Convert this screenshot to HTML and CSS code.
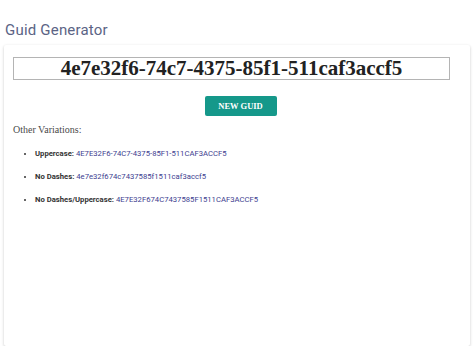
FILE: index.html
```html
<!DOCTYPE html>
<html lang="en">
  <head>
    <meta charset="UTF-8" />
    <meta name="viewport" content="width=device-width, initial-scale=1.0" />
    <title>Guid Generator</title>
    <link rel="stylesheet" href="styles.css">
  </head>
  <body>
    <h1 class="title">Guid Generator</h1>
    <div class="card">
      <div class="guid-box">4e7e32f6-74c7-4375-85f1-511caf3accf5</div>
      <div class="actions">
        <button class="btn">NEW GUID</button>
      </div>
      <p class="others">Other Variations:</p>
      <ul class="variations">
        <li><strong>Uppercase:</strong> <a href="#">4E7E32F6-74C7-4375-85F1-511CAF3ACCF5</a></li>
        <li><strong>No Dashes:</strong> <a href="#">4e7e32f674c7437585f1511caf3accf5</a></li>
        <li><strong>No Dashes/Uppercase:</strong> <a href="#">4E7E32F674C7437585F1511CAF3ACCF5</a></li>
      </ul>
    </div>
  </body>
</html>
```

FILE: styles.css
```css
body {
  margin: 0;
  padding: 0;
  background-color: #ffffff;
  font-family: Roboto, "Liberation Sans", sans-serif;
  color: #333333;
}
.title {
  margin: 0;
  padding: 21px 0 0 5px;
  height: 24px;
  font-size: 15px;
  font-weight: 400;
  letter-spacing: 0.2px;
  color: #5b6485;
}
.card {
  margin: 0 4px;
  height: 301px;
  box-sizing: border-box;
  padding: 12px 9px;
  background: #ffffff;
  border-radius: 2px;
  box-shadow: 0 1px 3px rgba(0, 0, 0, 0.22);
}
.guid-box {
  width: 437px;
  height: 23px;
  box-sizing: border-box;
  border: 1px solid #b4b4b4;
  text-align: center;
  font-family: "Liberation Serif", serif;
  font-weight: bold;
  font-size: 21px;
  line-height: 21px;
  color: #222222;
}
.actions {
  display: flex;
  justify-content: center;
  padding-left: 7px;
  margin-top: 16px;
}
.btn {
  width: 72px;
  height: 20px;
  border: none;
  border-radius: 2px;
  background-color: #15988a;
  color: #ffffff;
  font-family: "Liberation Serif", serif;
  font-weight: bold;
  font-size: 8.5px;
  padding: 0;
}
.others {
  margin: 8px 0 0;
  font-family: "Liberation Serif", serif;
  font-size: 10px;
  color: #4a4a4a;
}
.variations {
  margin: 13px 0 0;
  padding-left: 22px;
  font-size: 7.7px;
}
.variations li {
  height: 23px;
  line-height: 11px;
}
.variations strong {
  color: #333333;
}
.variations a {
  color: #3d3d8f;
  text-decoration: none;
}
```
